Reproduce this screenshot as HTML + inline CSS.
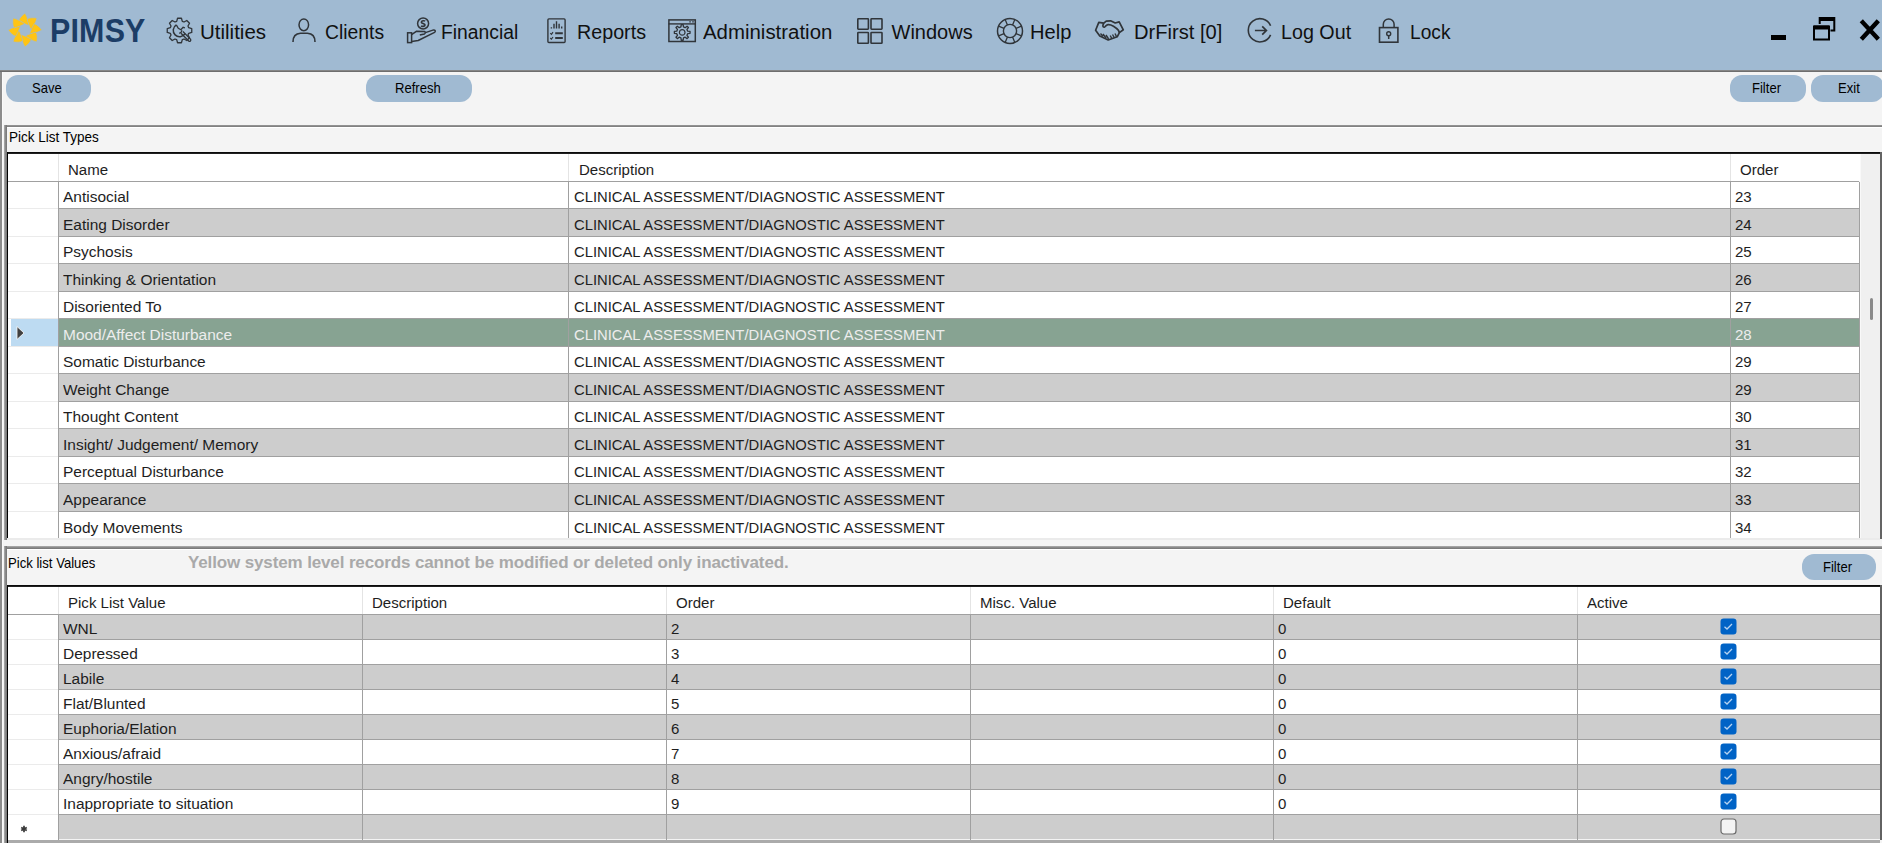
<!DOCTYPE html><html><head><meta charset="utf-8"><style>
*{margin:0;padding:0;box-sizing:border-box}
html,body{width:1882px;height:843px;overflow:hidden;background:#F4F4F4}
body{position:relative;font-family:"Liberation Sans",sans-serif}
.t{position:absolute;white-space:nowrap}
.r{position:absolute}
.btn{position:absolute;background:#A0BAD2;border-radius:12px}
</style></head><body><div class="r" style="left:0px;top:0px;width:1882px;height:70px;background:#A0BAD2;"></div>
<div class="r" style="left:0px;top:70px;width:1882px;height:1px;background:#858585;"></div>
<div class="r" style="left:0px;top:71px;width:1882px;height:1px;background:#6E6E6E;"></div>
<div class="r" style="left:0px;top:72px;width:2px;height:771px;background:#8C8C8C;"></div>
<div class="r" style="left:2px;top:72px;width:1px;height:771px;background:#FAFAFA;"></div>
<svg class="r" style="left:7px;top:12px" width="36" height="36" viewBox="-18 -18 36 36"><g fill="#FFC414" stroke="#A0BAD2" stroke-width="0.6" stroke-linejoin="round"><path d="M0.1,-16.8 C-2.6,-15 -5.6,-12 -6.3,-9.2 C-3.6,-7.6 0.6,-5.6 4.3,-4.4 C3.6,-8.6 2.2,-13 0.1,-16.8 Z" transform="rotate(0)" /><path d="M0.1,-16.8 C-2.6,-15 -5.6,-12 -6.3,-9.2 C-3.6,-7.6 0.6,-5.6 4.3,-4.4 C3.6,-8.6 2.2,-13 0.1,-16.8 Z" transform="rotate(45)" /><path d="M0.1,-16.8 C-2.6,-15 -5.6,-12 -6.3,-9.2 C-3.6,-7.6 0.6,-5.6 4.3,-4.4 C3.6,-8.6 2.2,-13 0.1,-16.8 Z" transform="rotate(90)" /><path d="M0.1,-16.8 C-2.6,-15 -5.6,-12 -6.3,-9.2 C-3.6,-7.6 0.6,-5.6 4.3,-4.4 C3.6,-8.6 2.2,-13 0.1,-16.8 Z" transform="rotate(135)" /><path d="M0.1,-16.8 C-2.6,-15 -5.6,-12 -6.3,-9.2 C-3.6,-7.6 0.6,-5.6 4.3,-4.4 C3.6,-8.6 2.2,-13 0.1,-16.8 Z" transform="rotate(180)" /><path d="M0.1,-16.8 C-2.6,-15 -5.6,-12 -6.3,-9.2 C-3.6,-7.6 0.6,-5.6 4.3,-4.4 C3.6,-8.6 2.2,-13 0.1,-16.8 Z" transform="rotate(225)" /><path d="M0.1,-16.8 C-2.6,-15 -5.6,-12 -6.3,-9.2 C-3.6,-7.6 0.6,-5.6 4.3,-4.4 C3.6,-8.6 2.2,-13 0.1,-16.8 Z" transform="rotate(270)" /><path d="M0.1,-16.8 C-2.6,-15 -5.6,-12 -6.3,-9.2 C-3.6,-7.6 0.6,-5.6 4.3,-4.4 C3.6,-8.6 2.2,-13 0.1,-16.8 Z" transform="rotate(315)" /></g></svg>
<div class="t" style="left:49.5px;top:11.22px;font-size:34px;line-height:37.984px;color:#1C3D66;font-weight:bold;transform:scaleX(0.895);transform-origin:0 0;letter-spacing:0.2px;">PIMSY</div>
<div class="t" style="left:200.46px;top:20.89px;font-size:20px;line-height:22.344px;color:#111;font-weight:normal;transform:scaleX(1.0242);transform-origin:0 0;">Utilities</div>
<div class="t" style="left:324.53px;top:20.89px;font-size:20px;line-height:22.344px;color:#111;font-weight:normal;transform:scaleX(0.9661);transform-origin:0 0;">Clients</div>
<div class="t" style="left:441.27px;top:20.89px;font-size:20px;line-height:22.344px;color:#111;font-weight:normal;transform:scaleX(0.9649);transform-origin:0 0;">Financial</div>
<div class="t" style="left:576.53px;top:20.89px;font-size:20px;line-height:22.344px;color:#111;font-weight:normal;transform:scaleX(0.9851);transform-origin:0 0;">Reports</div>
<div class="t" style="left:703.39px;top:20.89px;font-size:20px;line-height:22.344px;color:#111;font-weight:normal;transform:scaleX(1.0208);transform-origin:0 0;">Administration</div>
<div class="t" style="left:891.5px;top:20.89px;font-size:20px;line-height:22.344px;color:#111;font-weight:normal;transform:scaleX(1.0000);transform-origin:0 0;">Windows</div>
<div class="t" style="left:1030.29px;top:20.89px;font-size:20px;line-height:22.344px;color:#111;font-weight:normal;transform:scaleX(1.0053);transform-origin:0 0;">Help</div>
<div class="t" style="left:1134.49px;top:20.89px;font-size:20px;line-height:22.344px;color:#111;font-weight:normal;transform:scaleX(1.0060);transform-origin:0 0;">DrFirst [0]</div>
<div class="t" style="left:1281.33px;top:20.89px;font-size:20px;line-height:22.344px;color:#111;font-weight:normal;transform:scaleX(0.9855);transform-origin:0 0;">Log Out</div>
<div class="t" style="left:1409.88px;top:20.89px;font-size:20px;line-height:22.344px;color:#111;font-weight:normal;transform:scaleX(0.9575);transform-origin:0 0;">Lock</div>
<svg class="r" style="left:166px;top:17px;" width="28" height="28" viewBox="0 0 28 28" fill="none" stroke="#30353A" stroke-width="1.6"><g transform="translate(13.5,13.5)"><path d="M-2.81,-9.18 L-1.94,-12.25 L1.94,-12.25 L2.81,-9.18 L4.51,-8.48 L7.29,-10.03 L10.03,-7.29 L8.48,-4.51 L9.18,-2.81 L12.25,-1.94 L12.25,1.94 L9.18,2.81 L8.48,4.51 L10.03,7.29 L7.29,10.03 L4.51,8.48 L2.81,9.18 L1.94,12.25 L-1.94,12.25 L-2.81,9.18 L-4.51,8.48 L-7.29,10.03 L-10.03,7.29 L-8.48,4.51 L-9.18,2.81 L-12.25,1.94 L-12.25,-1.94 L-9.18,-2.81 L-8.48,-4.51 L-10.03,-7.29 L-7.29,-10.03 L-4.51,-8.48 Z" stroke-width="1.3" stroke-linejoin="round"/><path d="M-3.2,-5.6 A6.4,6.4 0 1 0 5.6,3.2" stroke-width="1.5"/><path d="M-3.2,-5.6 L-1.2,-2.2 L1.4,-0.8 L3.6,-3.2 L5.4,-2.6" stroke-width="1.3"/><path d="M1.5,2.8 L9.2,10.5 M3.4,1 L11,8.6 M9.2,10.5 C10.4,11.6 11.9,10.2 11,8.6" stroke-width="1.3"/><path d="M2.2,-0.4 A2.5,2.5 0 0 1 -0.4,2.6" stroke-width="1.2"/></g></svg>
<svg class="r" style="left:291px;top:17px;" width="27" height="27" viewBox="0 0 27 27" fill="none" stroke="#30353A" stroke-width="1.6"><ellipse cx="12.8" cy="7.8" rx="4.8" ry="5.9" stroke-width="1.5"/><path d="M2,25 C2,19.2 4.2,16.6 9.5,16.3 L16.5,16.3 C21.8,16.6 24,19.2 24,25" stroke-width="1.6"/></svg>
<svg class="r" style="left:402px;top:14px;" width="38" height="32" viewBox="0 0 38 32" fill="none" stroke="#30353A" stroke-width="1.6"><circle cx="21.1" cy="9.5" r="5.5" stroke-width="1.5"/><path d="M23.1,7.3 C22.4,6.5 19.4,6.4 19.4,8.2 C19.5,9.7 23,9.3 23,11 C22.9,12.7 19.9,12.6 19.1,11.8" stroke-width="1.7"/><rect x="5.6" y="18.8" width="4" height="9.8" stroke-width="1.5"/><path d="M9.6,20.6 L14.3,17.3 L22.6,17.5 C23.6,18 23.4,19.5 22.5,19.9 L17.8,21" stroke-width="1.5" stroke-linejoin="round"/><path d="M23.4,18.6 L31.6,15.9 C33.4,15.9 33.8,17.6 32.6,18.4 L16.2,26.5 L9.6,27.4" stroke-width="1.5" stroke-linejoin="round"/></svg>
<svg class="r" style="left:546px;top:17px;" width="22" height="28" viewBox="0 0 22 28" fill="none" stroke="#30353A" stroke-width="1.6"><rect x="1.9" y="1.9" width="17.2" height="23.6" rx="1" stroke-width="1.4"/><path d="M5.4,11.6 V10.2 M8,11.6 V6.8 M10.5,11.6 V4.3 M13.1,11.6 V6.8 M15.7,11.6 V9.4" stroke-width="1.4"/><path d="M4.3,16.2 L5.4,17.3 L7,15.2 M4.3,21 L5.4,22.1 L7,20" stroke-width="1.2"/><path d="M9.2,16.3 H16.8 M9.2,21.1 H16.8" stroke-width="2"/></svg>
<svg class="r" style="left:667px;top:18px;" width="31" height="26" viewBox="0 0 31 26" fill="none" stroke="#30353A" stroke-width="1.6"><rect x="1.9" y="1.9" width="26.4" height="21.6" stroke-width="1.5"/><path d="M1.5,5.9 H28.5" stroke-width="1.4"/><path d="M22.3,3.9 H23.8 M25.2,3.9 H26.8" stroke-width="1.1"/><g transform="translate(15.2,14.4)"><path d="M-1.26,-5.46 L-0.96,-7.84 L0.96,-7.84 L1.26,-5.46 L2.97,-4.75 L4.86,-6.23 L6.23,-4.86 L4.75,-2.97 L5.46,-1.26 L7.84,-0.96 L7.84,0.96 L5.46,1.26 L4.75,2.97 L6.23,4.86 L4.86,6.23 L2.97,4.75 L1.26,5.46 L0.96,7.84 L-0.96,7.84 L-1.26,5.46 L-2.97,4.75 L-4.86,6.23 L-6.23,4.86 L-4.75,2.97 L-5.46,1.26 L-7.84,0.96 L-7.84,-0.96 L-5.46,-1.26 L-4.75,-2.97 L-6.23,-4.86 L-4.86,-6.23 L-2.97,-4.75 Z" stroke-width="1.3" stroke-linejoin="round"/><circle r="2.8" stroke-width="1.2"/></g></svg>
<svg class="r" style="left:856px;top:17px;" width="29" height="28" viewBox="0 0 29 28" fill="none" stroke="#30353A" stroke-width="1.6"><rect x="1.8" y="1.8" width="10.6" height="10.4" rx="0.6"/><rect x="15" y="1.8" width="11" height="10.4" rx="0.6"/><rect x="1.8" y="15.5" width="10.6" height="10.8" rx="0.6"/><rect x="15" y="15.5" width="11" height="10.8" rx="0.6"/></svg>
<svg class="r" style="left:994.5px;top:15.5px;" width="30" height="30" viewBox="0 0 30 30" fill="none" stroke="#30353A" stroke-width="1.6"><circle cx="15" cy="15" r="12.5" stroke-width="1.5"/><circle cx="15" cy="15" r="6.6" stroke-width="1.4"/><path d="M12.46,9.02 L10.15,3.59 M17.54,9.02 L19.85,3.59 M20.98,12.46 L26.41,10.15 M20.98,17.54 L26.41,19.85 M17.54,20.98 L19.85,26.41 M12.46,20.98 L10.15,26.41 M9.02,17.54 L3.59,19.85 M9.02,12.46 L3.59,10.15" stroke-width="1.3"/></svg>
<svg class="r" style="left:1092px;top:16px;" width="36" height="28" viewBox="0 0 36 28" fill="none" stroke="#30353A" stroke-width="1.6"><path d="M3.6,14.2 L6.8,6.4 L11.8,7.2 L14.2,5.1 L18.6,4.8 L23.2,7 L27.2,5.9 L31.3,13.8 L27.4,16.6 L25.2,20.8 L16.2,24 L7.8,20 Z" stroke-width="1.7" stroke-linejoin="round"/><path d="M11.8,7.2 C10.5,9 10.5,11.5 12.4,11.2 C13.5,11 13.5,9 16,8.6 C19,8.3 24,11 26.6,14.6 L27.4,16.6" stroke-width="1.7"/><path d="M8.5,17.5 L11,20.5 M11,18 L14,22 M14,19 L16.6,23 M18.2,19.5 L20,22.8 M20.5,18.5 L22.5,22 M23,17.5 L24.6,20.8" stroke-width="1.4"/></svg>
<svg class="r" style="left:1246px;top:17px;" width="28" height="28" viewBox="0 0 28 28" fill="none" stroke="#30353A" stroke-width="1.6"><path d="M24.58,8.77 A11.6,11.6 0 1 0 24.58,17.83" stroke-width="1.6"/><path d="M8.9,13.5 H20 M16.2,9.3 L20.4,13.5 L16.2,17.7" stroke-width="1.7"/></svg>
<svg class="r" style="left:1377px;top:17px;" width="24" height="28" viewBox="0 0 24 28" fill="none" stroke="#30353A" stroke-width="1.6"><rect x="2.5" y="10.6" width="18.4" height="14.6" stroke-width="1.6"/><path d="M6.3,10.6 V7.3 A5.4,5.4 0 0 1 17.1,7.3 V10.6" stroke-width="1.5"/><circle cx="11.7" cy="16.8" r="2" stroke-width="1.4"/><path d="M11.7,18.8 V22" stroke-width="1.5"/></svg>
<div class="r" style="left:1771px;top:35px;width:15px;height:5px;background:#000;"></div>
<svg class="r" style="left:1812px;top:16px;" width="26" height="25" viewBox="0 0 26 25" fill="none" stroke="#30353A" stroke-width="1.6"><path d="M7.7,8 V2 H22.3 V14.5 H18.5" stroke="#000" stroke-width="2"/><path d="M7.7,3 H22.3" stroke="#000" stroke-width="4"/><rect x="2" y="10.5" width="15" height="13" stroke="#000" stroke-width="2"/><path d="M2,11.5 H17" stroke="#000" stroke-width="4"/></svg>
<svg class="r" style="left:1859px;top:18px;" width="23" height="24" viewBox="0 0 23 24" fill="none" stroke="#30353A" stroke-width="1.6"><path d="M3.8,4.4 L17.8,19.6 M17.8,4.4 L3.8,19.6" stroke="#000" stroke-width="4.4" stroke-linecap="square"/></svg>
<div class="btn" style="left:6px;top:75px;width:85px;height:27px;"></div><div class="t" style="left:32.1px;top:80.37px;font-size:15px;line-height:16.758px;color:#000;font-weight:normal;transform:scaleX(0.87);transform-origin:0 0;">Save</div>
<div class="btn" style="left:366px;top:75px;width:106px;height:27px;"></div><div class="t" style="left:394.6px;top:80.37px;font-size:15px;line-height:16.758px;color:#000;font-weight:normal;transform:scaleX(0.87);transform-origin:0 0;">Refresh</div>
<div class="btn" style="left:1730px;top:75px;width:76px;height:27px;"></div><div class="t" style="left:1752.0px;top:80.37px;font-size:15px;line-height:16.758px;color:#000;font-weight:normal;transform:scaleX(0.87);transform-origin:0 0;">Filter</div>
<div class="btn" style="left:1811px;top:75px;width:73px;height:27px;"></div><div class="t" style="left:1837.6px;top:80.37px;font-size:15px;line-height:16.758px;color:#000;font-weight:normal;transform:scaleX(0.87);transform-origin:0 0;">Exit</div>
<div class="r" style="left:5px;top:125px;width:1877px;height:2px;background:linear-gradient(#9A9A9A,#7A7A7A);"></div>
<div class="r" style="left:4px;top:125px;width:3px;height:415px;background:linear-gradient(90deg,#B0B0B0,#8A8A8A,#747474);"></div>
<div class="r" style="left:7px;top:127px;width:1875px;height:1px;background:#FFFFFF;"></div>
<div class="t" style="left:8.7px;top:129.42px;font-size:15px;line-height:16.758px;color:#000;font-weight:normal;transform:scaleX(0.9);transform-origin:0 0;">Pick List Types</div>
<div class="r" style="left:7px;top:152px;width:1873px;height:2px;background:linear-gradient(#000,#2A2A2A);"></div>
<div class="r" style="left:7px;top:152px;width:1px;height:386px;background:#000;"></div>
<div class="r" style="left:1880px;top:152px;width:2px;height:387px;background:#646464;"></div>
<div class="r" style="left:8px;top:154px;width:1852px;height:27px;background:#FFFFFF;"></div>
<div class="r" style="left:8px;top:181px;width:1851px;height:1px;background:#A0A0A0;"></div>
<div class="r" style="left:58px;top:154px;width:1px;height:27px;background:#E4E4E4;"></div>
<div class="r" style="left:568px;top:154px;width:1px;height:27px;background:#E4E4E4;"></div>
<div class="r" style="left:1730px;top:154px;width:1px;height:27px;background:#E4E4E4;"></div>
<div class="t" style="left:68px;top:160.97px;font-size:15.5px;line-height:17.316px;color:#1E1E1E;font-weight:normal;transform:scaleX(0.97);transform-origin:0 0;">Name</div>
<div class="t" style="left:578.5px;top:160.97px;font-size:15.5px;line-height:17.316px;color:#1E1E1E;font-weight:normal;transform:scaleX(0.97);transform-origin:0 0;">Description</div>
<div class="t" style="left:1740px;top:160.97px;font-size:15.5px;line-height:17.316px;color:#1E1E1E;font-weight:normal;transform:scaleX(0.97);transform-origin:0 0;">Order</div>
<div class="r" style="left:1860px;top:154px;width:20px;height:385px;background:#F0F0F0;"></div>
<div class="r" style="left:1860px;top:154px;width:1px;height:385px;background:#F9F9F9;"></div>
<div class="r" style="left:1870px;top:298px;width:3px;height:22px;background:#8A8A8A;border-radius:1.5px;"></div>
<div class="r" style="left:8px;top:182px;width:50px;height:27px;background:#FFFFFF;"></div>
<div class="r" style="left:8px;top:208px;width:50px;height:1px;background:#EBEBEB;"></div>
<div class="r" style="left:59px;top:182px;width:1800px;height:26px;background:#FFFFFF;"></div>
<div class="r" style="left:59px;top:208px;width:1800px;height:1px;background:#A0A0A0;"></div>
<div class="r" style="left:58px;top:182px;width:1px;height:27px;background:#A0A0A0;"></div>
<div class="r" style="left:568px;top:182px;width:1px;height:27px;background:#A0A0A0;"></div>
<div class="r" style="left:1730px;top:182px;width:1px;height:27px;background:#A0A0A0;"></div>
<div class="r" style="left:1859px;top:182px;width:1px;height:27px;background:#A0A0A0;"></div>
<div class="t" style="left:63px;top:188.47px;font-size:15.5px;line-height:17.316px;color:#1E1E1E;font-weight:normal;transform:scaleX(0.998);transform-origin:0 0;">Antisocial</div>
<div class="t" style="left:573.5px;top:188.47px;font-size:15.5px;line-height:17.316px;color:#1E1E1E;font-weight:normal;transform:scaleX(0.954);transform-origin:0 0;">CLINICAL ASSESSMENT/DIAGNOSTIC ASSESSMENT</div>
<div class="t" style="left:1735px;top:188.47px;font-size:15.5px;line-height:17.316px;color:#1E1E1E;font-weight:normal;transform:scaleX(0.97);transform-origin:0 0;">23</div>
<div class="r" style="left:8px;top:209px;width:50px;height:28px;background:#FFFFFF;"></div>
<div class="r" style="left:8px;top:236px;width:50px;height:1px;background:#EBEBEB;"></div>
<div class="r" style="left:59px;top:209px;width:1800px;height:27px;background:#CDCDCD;"></div>
<div class="r" style="left:59px;top:236px;width:1800px;height:1px;background:#A0A0A0;"></div>
<div class="r" style="left:58px;top:209px;width:1px;height:28px;background:#A0A0A0;"></div>
<div class="r" style="left:568px;top:209px;width:1px;height:28px;background:#A0A0A0;"></div>
<div class="r" style="left:1730px;top:209px;width:1px;height:28px;background:#A0A0A0;"></div>
<div class="r" style="left:1859px;top:209px;width:1px;height:28px;background:#A0A0A0;"></div>
<div class="t" style="left:63px;top:216.47px;font-size:15.5px;line-height:17.316px;color:#1E1E1E;font-weight:normal;transform:scaleX(0.998);transform-origin:0 0;">Eating Disorder</div>
<div class="t" style="left:573.5px;top:216.47px;font-size:15.5px;line-height:17.316px;color:#1E1E1E;font-weight:normal;transform:scaleX(0.954);transform-origin:0 0;">CLINICAL ASSESSMENT/DIAGNOSTIC ASSESSMENT</div>
<div class="t" style="left:1735px;top:216.47px;font-size:15.5px;line-height:17.316px;color:#1E1E1E;font-weight:normal;transform:scaleX(0.97);transform-origin:0 0;">24</div>
<div class="r" style="left:8px;top:237px;width:50px;height:27px;background:#FFFFFF;"></div>
<div class="r" style="left:8px;top:263px;width:50px;height:1px;background:#EBEBEB;"></div>
<div class="r" style="left:59px;top:237px;width:1800px;height:26px;background:#FFFFFF;"></div>
<div class="r" style="left:59px;top:263px;width:1800px;height:1px;background:#A0A0A0;"></div>
<div class="r" style="left:58px;top:237px;width:1px;height:27px;background:#A0A0A0;"></div>
<div class="r" style="left:568px;top:237px;width:1px;height:27px;background:#A0A0A0;"></div>
<div class="r" style="left:1730px;top:237px;width:1px;height:27px;background:#A0A0A0;"></div>
<div class="r" style="left:1859px;top:237px;width:1px;height:27px;background:#A0A0A0;"></div>
<div class="t" style="left:63px;top:243.47px;font-size:15.5px;line-height:17.316px;color:#1E1E1E;font-weight:normal;transform:scaleX(0.998);transform-origin:0 0;">Psychosis</div>
<div class="t" style="left:573.5px;top:243.47px;font-size:15.5px;line-height:17.316px;color:#1E1E1E;font-weight:normal;transform:scaleX(0.954);transform-origin:0 0;">CLINICAL ASSESSMENT/DIAGNOSTIC ASSESSMENT</div>
<div class="t" style="left:1735px;top:243.47px;font-size:15.5px;line-height:17.316px;color:#1E1E1E;font-weight:normal;transform:scaleX(0.97);transform-origin:0 0;">25</div>
<div class="r" style="left:8px;top:264px;width:50px;height:28px;background:#FFFFFF;"></div>
<div class="r" style="left:8px;top:291px;width:50px;height:1px;background:#EBEBEB;"></div>
<div class="r" style="left:59px;top:264px;width:1800px;height:27px;background:#CDCDCD;"></div>
<div class="r" style="left:59px;top:291px;width:1800px;height:1px;background:#A0A0A0;"></div>
<div class="r" style="left:58px;top:264px;width:1px;height:28px;background:#A0A0A0;"></div>
<div class="r" style="left:568px;top:264px;width:1px;height:28px;background:#A0A0A0;"></div>
<div class="r" style="left:1730px;top:264px;width:1px;height:28px;background:#A0A0A0;"></div>
<div class="r" style="left:1859px;top:264px;width:1px;height:28px;background:#A0A0A0;"></div>
<div class="t" style="left:63px;top:271.47px;font-size:15.5px;line-height:17.316px;color:#1E1E1E;font-weight:normal;transform:scaleX(0.998);transform-origin:0 0;">Thinking &amp; Orientation</div>
<div class="t" style="left:573.5px;top:271.47px;font-size:15.5px;line-height:17.316px;color:#1E1E1E;font-weight:normal;transform:scaleX(0.954);transform-origin:0 0;">CLINICAL ASSESSMENT/DIAGNOSTIC ASSESSMENT</div>
<div class="t" style="left:1735px;top:271.47px;font-size:15.5px;line-height:17.316px;color:#1E1E1E;font-weight:normal;transform:scaleX(0.97);transform-origin:0 0;">26</div>
<div class="r" style="left:8px;top:292px;width:50px;height:27px;background:#FFFFFF;"></div>
<div class="r" style="left:8px;top:318px;width:50px;height:1px;background:#EBEBEB;"></div>
<div class="r" style="left:59px;top:292px;width:1800px;height:26px;background:#FFFFFF;"></div>
<div class="r" style="left:59px;top:318px;width:1800px;height:1px;background:#A0A0A0;"></div>
<div class="r" style="left:58px;top:292px;width:1px;height:27px;background:#A0A0A0;"></div>
<div class="r" style="left:568px;top:292px;width:1px;height:27px;background:#A0A0A0;"></div>
<div class="r" style="left:1730px;top:292px;width:1px;height:27px;background:#A0A0A0;"></div>
<div class="r" style="left:1859px;top:292px;width:1px;height:27px;background:#A0A0A0;"></div>
<div class="t" style="left:63px;top:298.47px;font-size:15.5px;line-height:17.316px;color:#1E1E1E;font-weight:normal;transform:scaleX(0.998);transform-origin:0 0;">Disoriented To</div>
<div class="t" style="left:573.5px;top:298.47px;font-size:15.5px;line-height:17.316px;color:#1E1E1E;font-weight:normal;transform:scaleX(0.954);transform-origin:0 0;">CLINICAL ASSESSMENT/DIAGNOSTIC ASSESSMENT</div>
<div class="t" style="left:1735px;top:298.47px;font-size:15.5px;line-height:17.316px;color:#1E1E1E;font-weight:normal;transform:scaleX(0.97);transform-origin:0 0;">27</div>
<div class="r" style="left:8px;top:319px;width:50px;height:28px;background:#FFFFFF;"></div>
<div class="r" style="left:11px;top:319px;width:47px;height:27px;background:#BDDBF2;"></div>
<div class="r" style="left:8px;top:346px;width:50px;height:1px;background:#EBEBEB;"></div>
<div class="r" style="left:59px;top:319px;width:1800px;height:27px;background:#87A392;"></div>
<div class="r" style="left:59px;top:346px;width:1800px;height:1px;background:#A0A0A0;"></div>
<div class="r" style="left:58px;top:319px;width:1px;height:28px;background:#A0A0A0;"></div>
<div class="r" style="left:568px;top:319px;width:1px;height:28px;background:#A0A0A0;"></div>
<div class="r" style="left:1730px;top:319px;width:1px;height:28px;background:#A0A0A0;"></div>
<div class="r" style="left:1859px;top:319px;width:1px;height:28px;background:#A0A0A0;"></div>
<div class="t" style="left:63px;top:326.47px;font-size:15.5px;line-height:17.316px;color:#EDEDED;font-weight:normal;transform:scaleX(0.998);transform-origin:0 0;">Mood/Affect Disturbance</div>
<div class="t" style="left:573.5px;top:326.47px;font-size:15.5px;line-height:17.316px;color:#EDEDED;font-weight:normal;transform:scaleX(0.954);transform-origin:0 0;">CLINICAL ASSESSMENT/DIAGNOSTIC ASSESSMENT</div>
<div class="t" style="left:1735px;top:326.47px;font-size:15.5px;line-height:17.316px;color:#EDEDED;font-weight:normal;transform:scaleX(0.97);transform-origin:0 0;">28</div>
<svg class="r" style="left:15px;top:325px" width="12" height="16" viewBox="0 0 12 16"><path d="M2,1.5 L9,8 L2,14.5 Z" fill="#404040" stroke="#fff" stroke-width="0.8"/></svg>
<div class="r" style="left:8px;top:347px;width:50px;height:27px;background:#FFFFFF;"></div>
<div class="r" style="left:8px;top:373px;width:50px;height:1px;background:#EBEBEB;"></div>
<div class="r" style="left:59px;top:347px;width:1800px;height:26px;background:#FFFFFF;"></div>
<div class="r" style="left:59px;top:373px;width:1800px;height:1px;background:#A0A0A0;"></div>
<div class="r" style="left:58px;top:347px;width:1px;height:27px;background:#A0A0A0;"></div>
<div class="r" style="left:568px;top:347px;width:1px;height:27px;background:#A0A0A0;"></div>
<div class="r" style="left:1730px;top:347px;width:1px;height:27px;background:#A0A0A0;"></div>
<div class="r" style="left:1859px;top:347px;width:1px;height:27px;background:#A0A0A0;"></div>
<div class="t" style="left:63px;top:353.47px;font-size:15.5px;line-height:17.316px;color:#1E1E1E;font-weight:normal;transform:scaleX(0.998);transform-origin:0 0;">Somatic Disturbance</div>
<div class="t" style="left:573.5px;top:353.47px;font-size:15.5px;line-height:17.316px;color:#1E1E1E;font-weight:normal;transform:scaleX(0.954);transform-origin:0 0;">CLINICAL ASSESSMENT/DIAGNOSTIC ASSESSMENT</div>
<div class="t" style="left:1735px;top:353.47px;font-size:15.5px;line-height:17.316px;color:#1E1E1E;font-weight:normal;transform:scaleX(0.97);transform-origin:0 0;">29</div>
<div class="r" style="left:8px;top:374px;width:50px;height:28px;background:#FFFFFF;"></div>
<div class="r" style="left:8px;top:401px;width:50px;height:1px;background:#EBEBEB;"></div>
<div class="r" style="left:59px;top:374px;width:1800px;height:27px;background:#CDCDCD;"></div>
<div class="r" style="left:59px;top:401px;width:1800px;height:1px;background:#A0A0A0;"></div>
<div class="r" style="left:58px;top:374px;width:1px;height:28px;background:#A0A0A0;"></div>
<div class="r" style="left:568px;top:374px;width:1px;height:28px;background:#A0A0A0;"></div>
<div class="r" style="left:1730px;top:374px;width:1px;height:28px;background:#A0A0A0;"></div>
<div class="r" style="left:1859px;top:374px;width:1px;height:28px;background:#A0A0A0;"></div>
<div class="t" style="left:63px;top:381.47px;font-size:15.5px;line-height:17.316px;color:#1E1E1E;font-weight:normal;transform:scaleX(0.998);transform-origin:0 0;">Weight Change</div>
<div class="t" style="left:573.5px;top:381.47px;font-size:15.5px;line-height:17.316px;color:#1E1E1E;font-weight:normal;transform:scaleX(0.954);transform-origin:0 0;">CLINICAL ASSESSMENT/DIAGNOSTIC ASSESSMENT</div>
<div class="t" style="left:1735px;top:381.47px;font-size:15.5px;line-height:17.316px;color:#1E1E1E;font-weight:normal;transform:scaleX(0.97);transform-origin:0 0;">29</div>
<div class="r" style="left:8px;top:402px;width:50px;height:27px;background:#FFFFFF;"></div>
<div class="r" style="left:8px;top:428px;width:50px;height:1px;background:#EBEBEB;"></div>
<div class="r" style="left:59px;top:402px;width:1800px;height:26px;background:#FFFFFF;"></div>
<div class="r" style="left:59px;top:428px;width:1800px;height:1px;background:#A0A0A0;"></div>
<div class="r" style="left:58px;top:402px;width:1px;height:27px;background:#A0A0A0;"></div>
<div class="r" style="left:568px;top:402px;width:1px;height:27px;background:#A0A0A0;"></div>
<div class="r" style="left:1730px;top:402px;width:1px;height:27px;background:#A0A0A0;"></div>
<div class="r" style="left:1859px;top:402px;width:1px;height:27px;background:#A0A0A0;"></div>
<div class="t" style="left:63px;top:408.47px;font-size:15.5px;line-height:17.316px;color:#1E1E1E;font-weight:normal;transform:scaleX(0.998);transform-origin:0 0;">Thought Content</div>
<div class="t" style="left:573.5px;top:408.47px;font-size:15.5px;line-height:17.316px;color:#1E1E1E;font-weight:normal;transform:scaleX(0.954);transform-origin:0 0;">CLINICAL ASSESSMENT/DIAGNOSTIC ASSESSMENT</div>
<div class="t" style="left:1735px;top:408.47px;font-size:15.5px;line-height:17.316px;color:#1E1E1E;font-weight:normal;transform:scaleX(0.97);transform-origin:0 0;">30</div>
<div class="r" style="left:8px;top:429px;width:50px;height:28px;background:#FFFFFF;"></div>
<div class="r" style="left:8px;top:456px;width:50px;height:1px;background:#EBEBEB;"></div>
<div class="r" style="left:59px;top:429px;width:1800px;height:27px;background:#CDCDCD;"></div>
<div class="r" style="left:59px;top:456px;width:1800px;height:1px;background:#A0A0A0;"></div>
<div class="r" style="left:58px;top:429px;width:1px;height:28px;background:#A0A0A0;"></div>
<div class="r" style="left:568px;top:429px;width:1px;height:28px;background:#A0A0A0;"></div>
<div class="r" style="left:1730px;top:429px;width:1px;height:28px;background:#A0A0A0;"></div>
<div class="r" style="left:1859px;top:429px;width:1px;height:28px;background:#A0A0A0;"></div>
<div class="t" style="left:63px;top:436.47px;font-size:15.5px;line-height:17.316px;color:#1E1E1E;font-weight:normal;transform:scaleX(0.998);transform-origin:0 0;">Insight/ Judgement/ Memory</div>
<div class="t" style="left:573.5px;top:436.47px;font-size:15.5px;line-height:17.316px;color:#1E1E1E;font-weight:normal;transform:scaleX(0.954);transform-origin:0 0;">CLINICAL ASSESSMENT/DIAGNOSTIC ASSESSMENT</div>
<div class="t" style="left:1735px;top:436.47px;font-size:15.5px;line-height:17.316px;color:#1E1E1E;font-weight:normal;transform:scaleX(0.97);transform-origin:0 0;">31</div>
<div class="r" style="left:8px;top:457px;width:50px;height:27px;background:#FFFFFF;"></div>
<div class="r" style="left:8px;top:483px;width:50px;height:1px;background:#EBEBEB;"></div>
<div class="r" style="left:59px;top:457px;width:1800px;height:26px;background:#FFFFFF;"></div>
<div class="r" style="left:59px;top:483px;width:1800px;height:1px;background:#A0A0A0;"></div>
<div class="r" style="left:58px;top:457px;width:1px;height:27px;background:#A0A0A0;"></div>
<div class="r" style="left:568px;top:457px;width:1px;height:27px;background:#A0A0A0;"></div>
<div class="r" style="left:1730px;top:457px;width:1px;height:27px;background:#A0A0A0;"></div>
<div class="r" style="left:1859px;top:457px;width:1px;height:27px;background:#A0A0A0;"></div>
<div class="t" style="left:63px;top:463.47px;font-size:15.5px;line-height:17.316px;color:#1E1E1E;font-weight:normal;transform:scaleX(0.998);transform-origin:0 0;">Perceptual Disturbance</div>
<div class="t" style="left:573.5px;top:463.47px;font-size:15.5px;line-height:17.316px;color:#1E1E1E;font-weight:normal;transform:scaleX(0.954);transform-origin:0 0;">CLINICAL ASSESSMENT/DIAGNOSTIC ASSESSMENT</div>
<div class="t" style="left:1735px;top:463.47px;font-size:15.5px;line-height:17.316px;color:#1E1E1E;font-weight:normal;transform:scaleX(0.97);transform-origin:0 0;">32</div>
<div class="r" style="left:8px;top:484px;width:50px;height:28px;background:#FFFFFF;"></div>
<div class="r" style="left:8px;top:511px;width:50px;height:1px;background:#EBEBEB;"></div>
<div class="r" style="left:59px;top:484px;width:1800px;height:27px;background:#CDCDCD;"></div>
<div class="r" style="left:59px;top:511px;width:1800px;height:1px;background:#A0A0A0;"></div>
<div class="r" style="left:58px;top:484px;width:1px;height:28px;background:#A0A0A0;"></div>
<div class="r" style="left:568px;top:484px;width:1px;height:28px;background:#A0A0A0;"></div>
<div class="r" style="left:1730px;top:484px;width:1px;height:28px;background:#A0A0A0;"></div>
<div class="r" style="left:1859px;top:484px;width:1px;height:28px;background:#A0A0A0;"></div>
<div class="t" style="left:63px;top:491.47px;font-size:15.5px;line-height:17.316px;color:#1E1E1E;font-weight:normal;transform:scaleX(0.998);transform-origin:0 0;">Appearance</div>
<div class="t" style="left:573.5px;top:491.47px;font-size:15.5px;line-height:17.316px;color:#1E1E1E;font-weight:normal;transform:scaleX(0.954);transform-origin:0 0;">CLINICAL ASSESSMENT/DIAGNOSTIC ASSESSMENT</div>
<div class="t" style="left:1735px;top:491.47px;font-size:15.5px;line-height:17.316px;color:#1E1E1E;font-weight:normal;transform:scaleX(0.97);transform-origin:0 0;">33</div>
<div class="r" style="left:8px;top:512px;width:50px;height:28px;background:#FFFFFF;"></div>
<div class="r" style="left:59px;top:512px;width:1800px;height:27px;background:#FFFFFF;"></div>
<div class="r" style="left:58px;top:512px;width:1px;height:28px;background:#A0A0A0;"></div>
<div class="r" style="left:568px;top:512px;width:1px;height:28px;background:#A0A0A0;"></div>
<div class="r" style="left:1730px;top:512px;width:1px;height:28px;background:#A0A0A0;"></div>
<div class="r" style="left:1859px;top:512px;width:1px;height:28px;background:#A0A0A0;"></div>
<div class="t" style="left:63px;top:519.47px;font-size:15.5px;line-height:17.316px;color:#1E1E1E;font-weight:normal;transform:scaleX(0.998);transform-origin:0 0;">Body Movements</div>
<div class="t" style="left:573.5px;top:519.47px;font-size:15.5px;line-height:17.316px;color:#1E1E1E;font-weight:normal;transform:scaleX(0.954);transform-origin:0 0;">CLINICAL ASSESSMENT/DIAGNOSTIC ASSESSMENT</div>
<div class="t" style="left:1735px;top:519.47px;font-size:15.5px;line-height:17.316px;color:#1E1E1E;font-weight:normal;transform:scaleX(0.97);transform-origin:0 0;">34</div>
<div class="r" style="left:8px;top:539px;width:1872px;height:7px;background:#F4F4F4;"></div>
<div class="r" style="left:7px;top:538px;width:1873px;height:2px;background:#EBEBEB;"></div>
<div class="r" style="left:4px;top:546px;width:1878px;height:3px;background:linear-gradient(#B0B0B0,#8A8A8A,#747474);"></div>
<div class="r" style="left:4px;top:546px;width:3px;height:297px;background:linear-gradient(90deg,#B0B0B0,#8A8A8A,#747474);"></div>
<div class="r" style="left:7px;top:549px;width:1875px;height:1px;background:#FFFFFF;"></div>
<div class="r" style="left:7px;top:550px;width:1875px;height:35px;background:#F4F4F4;"></div>
<div class="t" style="left:7.6px;top:555.02px;font-size:15px;line-height:16.758px;color:#000;font-weight:normal;transform:scaleX(0.875);transform-origin:0 0;">Pick list Values</div>
<div class="t" style="left:188px;top:553.11px;font-size:17px;line-height:18.992px;color:#A9A9A9;font-weight:bold;letter-spacing:-0.13px;">Yellow system level records cannot be modified or deleted only inactivated.</div>
<div class="btn" style="left:1802px;top:554px;width:74px;height:26px;"></div><div class="t" style="left:1823.0px;top:558.87px;font-size:15px;line-height:16.758px;color:#000;font-weight:normal;transform:scaleX(0.87);transform-origin:0 0;">Filter</div>
<div class="r" style="left:7px;top:585px;width:1873px;height:2px;background:linear-gradient(#000,#2A2A2A);"></div>
<div class="r" style="left:7px;top:585px;width:1px;height:258px;background:#000;"></div>
<div class="r" style="left:1880px;top:585px;width:2px;height:255px;background:#626262;"></div>
<div class="r" style="left:8px;top:587px;width:1872px;height:27px;background:#FFFFFF;"></div>
<div class="r" style="left:8px;top:614px;width:1872px;height:1px;background:#A0A0A0;"></div>
<div class="r" style="left:58px;top:587px;width:1px;height:27px;background:#E4E4E4;"></div>
<div class="t" style="left:68px;top:593.97px;font-size:15.5px;line-height:17.316px;color:#1E1E1E;font-weight:normal;transform:scaleX(0.97);transform-origin:0 0;">Pick List Value</div>
<div class="r" style="left:362px;top:587px;width:1px;height:27px;background:#E4E4E4;"></div>
<div class="t" style="left:372px;top:593.97px;font-size:15.5px;line-height:17.316px;color:#1E1E1E;font-weight:normal;transform:scaleX(0.97);transform-origin:0 0;">Description</div>
<div class="r" style="left:666px;top:587px;width:1px;height:27px;background:#E4E4E4;"></div>
<div class="t" style="left:676px;top:593.97px;font-size:15.5px;line-height:17.316px;color:#1E1E1E;font-weight:normal;transform:scaleX(0.97);transform-origin:0 0;">Order</div>
<div class="r" style="left:970px;top:587px;width:1px;height:27px;background:#E4E4E4;"></div>
<div class="t" style="left:980px;top:593.97px;font-size:15.5px;line-height:17.316px;color:#1E1E1E;font-weight:normal;transform:scaleX(0.97);transform-origin:0 0;">Misc. Value</div>
<div class="r" style="left:1273px;top:587px;width:1px;height:27px;background:#E4E4E4;"></div>
<div class="t" style="left:1283px;top:593.97px;font-size:15.5px;line-height:17.316px;color:#1E1E1E;font-weight:normal;transform:scaleX(0.97);transform-origin:0 0;">Default</div>
<div class="r" style="left:1577px;top:587px;width:1px;height:27px;background:#E4E4E4;"></div>
<div class="t" style="left:1587px;top:593.97px;font-size:15.5px;line-height:17.316px;color:#1E1E1E;font-weight:normal;transform:scaleX(0.97);transform-origin:0 0;">Active</div>
<div class="r" style="left:8px;top:615px;width:50px;height:25px;background:#FFFFFF;"></div>
<div class="r" style="left:8px;top:639px;width:50px;height:1px;background:#EBEBEB;"></div>
<div class="r" style="left:59px;top:615px;width:1821px;height:24px;background:#CDCDCD;"></div>
<div class="r" style="left:59px;top:639px;width:1821px;height:1px;background:#A0A0A0;"></div>
<div class="r" style="left:58px;top:615px;width:1px;height:25px;background:#A0A0A0;"></div>
<div class="r" style="left:362px;top:615px;width:1px;height:25px;background:#A0A0A0;"></div>
<div class="r" style="left:666px;top:615px;width:1px;height:25px;background:#A0A0A0;"></div>
<div class="r" style="left:970px;top:615px;width:1px;height:25px;background:#A0A0A0;"></div>
<div class="r" style="left:1273px;top:615px;width:1px;height:25px;background:#A0A0A0;"></div>
<div class="r" style="left:1577px;top:615px;width:1px;height:25px;background:#A0A0A0;"></div>
<div class="t" style="left:63px;top:620.47px;font-size:15.5px;line-height:17.316px;color:#1E1E1E;font-weight:normal;transform:scaleX(0.998);transform-origin:0 0;">WNL</div>
<div class="t" style="left:671px;top:620.47px;font-size:15.5px;line-height:17.316px;color:#1E1E1E;font-weight:normal;transform:scaleX(0.97);transform-origin:0 0;">2</div>
<div class="t" style="left:1278px;top:620.47px;font-size:15.5px;line-height:17.316px;color:#1E1E1E;font-weight:normal;transform:scaleX(0.97);transform-origin:0 0;">0</div>
<svg class="r" style="left:1720px;top:618px" width="17" height="17" viewBox="0 0 17 17"><rect x="0.5" y="0.5" width="16" height="16" rx="3.2" fill="#0063C6"/><path d="M4.5,8.8 L7,11 L12,6" stroke="#B5D3F2" stroke-width="1.3" fill="none"/></svg>
<div class="r" style="left:8px;top:640px;width:50px;height:25px;background:#FFFFFF;"></div>
<div class="r" style="left:8px;top:664px;width:50px;height:1px;background:#EBEBEB;"></div>
<div class="r" style="left:59px;top:640px;width:1821px;height:24px;background:#FFFFFF;"></div>
<div class="r" style="left:59px;top:664px;width:1821px;height:1px;background:#A0A0A0;"></div>
<div class="r" style="left:58px;top:640px;width:1px;height:25px;background:#A0A0A0;"></div>
<div class="r" style="left:362px;top:640px;width:1px;height:25px;background:#A0A0A0;"></div>
<div class="r" style="left:666px;top:640px;width:1px;height:25px;background:#A0A0A0;"></div>
<div class="r" style="left:970px;top:640px;width:1px;height:25px;background:#A0A0A0;"></div>
<div class="r" style="left:1273px;top:640px;width:1px;height:25px;background:#A0A0A0;"></div>
<div class="r" style="left:1577px;top:640px;width:1px;height:25px;background:#A0A0A0;"></div>
<div class="t" style="left:63px;top:645.47px;font-size:15.5px;line-height:17.316px;color:#1E1E1E;font-weight:normal;transform:scaleX(0.998);transform-origin:0 0;">Depressed</div>
<div class="t" style="left:671px;top:645.47px;font-size:15.5px;line-height:17.316px;color:#1E1E1E;font-weight:normal;transform:scaleX(0.97);transform-origin:0 0;">3</div>
<div class="t" style="left:1278px;top:645.47px;font-size:15.5px;line-height:17.316px;color:#1E1E1E;font-weight:normal;transform:scaleX(0.97);transform-origin:0 0;">0</div>
<svg class="r" style="left:1720px;top:643px" width="17" height="17" viewBox="0 0 17 17"><rect x="0.5" y="0.5" width="16" height="16" rx="3.2" fill="#0063C6"/><path d="M4.5,8.8 L7,11 L12,6" stroke="#B5D3F2" stroke-width="1.3" fill="none"/></svg>
<div class="r" style="left:8px;top:665px;width:50px;height:25px;background:#FFFFFF;"></div>
<div class="r" style="left:8px;top:689px;width:50px;height:1px;background:#EBEBEB;"></div>
<div class="r" style="left:59px;top:665px;width:1821px;height:24px;background:#CDCDCD;"></div>
<div class="r" style="left:59px;top:689px;width:1821px;height:1px;background:#A0A0A0;"></div>
<div class="r" style="left:58px;top:665px;width:1px;height:25px;background:#A0A0A0;"></div>
<div class="r" style="left:362px;top:665px;width:1px;height:25px;background:#A0A0A0;"></div>
<div class="r" style="left:666px;top:665px;width:1px;height:25px;background:#A0A0A0;"></div>
<div class="r" style="left:970px;top:665px;width:1px;height:25px;background:#A0A0A0;"></div>
<div class="r" style="left:1273px;top:665px;width:1px;height:25px;background:#A0A0A0;"></div>
<div class="r" style="left:1577px;top:665px;width:1px;height:25px;background:#A0A0A0;"></div>
<div class="t" style="left:63px;top:670.47px;font-size:15.5px;line-height:17.316px;color:#1E1E1E;font-weight:normal;transform:scaleX(0.998);transform-origin:0 0;">Labile</div>
<div class="t" style="left:671px;top:670.47px;font-size:15.5px;line-height:17.316px;color:#1E1E1E;font-weight:normal;transform:scaleX(0.97);transform-origin:0 0;">4</div>
<div class="t" style="left:1278px;top:670.47px;font-size:15.5px;line-height:17.316px;color:#1E1E1E;font-weight:normal;transform:scaleX(0.97);transform-origin:0 0;">0</div>
<svg class="r" style="left:1720px;top:668px" width="17" height="17" viewBox="0 0 17 17"><rect x="0.5" y="0.5" width="16" height="16" rx="3.2" fill="#0063C6"/><path d="M4.5,8.8 L7,11 L12,6" stroke="#B5D3F2" stroke-width="1.3" fill="none"/></svg>
<div class="r" style="left:8px;top:690px;width:50px;height:25px;background:#FFFFFF;"></div>
<div class="r" style="left:8px;top:714px;width:50px;height:1px;background:#EBEBEB;"></div>
<div class="r" style="left:59px;top:690px;width:1821px;height:24px;background:#FFFFFF;"></div>
<div class="r" style="left:59px;top:714px;width:1821px;height:1px;background:#A0A0A0;"></div>
<div class="r" style="left:58px;top:690px;width:1px;height:25px;background:#A0A0A0;"></div>
<div class="r" style="left:362px;top:690px;width:1px;height:25px;background:#A0A0A0;"></div>
<div class="r" style="left:666px;top:690px;width:1px;height:25px;background:#A0A0A0;"></div>
<div class="r" style="left:970px;top:690px;width:1px;height:25px;background:#A0A0A0;"></div>
<div class="r" style="left:1273px;top:690px;width:1px;height:25px;background:#A0A0A0;"></div>
<div class="r" style="left:1577px;top:690px;width:1px;height:25px;background:#A0A0A0;"></div>
<div class="t" style="left:63px;top:695.47px;font-size:15.5px;line-height:17.316px;color:#1E1E1E;font-weight:normal;transform:scaleX(0.998);transform-origin:0 0;">Flat/Blunted</div>
<div class="t" style="left:671px;top:695.47px;font-size:15.5px;line-height:17.316px;color:#1E1E1E;font-weight:normal;transform:scaleX(0.97);transform-origin:0 0;">5</div>
<div class="t" style="left:1278px;top:695.47px;font-size:15.5px;line-height:17.316px;color:#1E1E1E;font-weight:normal;transform:scaleX(0.97);transform-origin:0 0;">0</div>
<svg class="r" style="left:1720px;top:693px" width="17" height="17" viewBox="0 0 17 17"><rect x="0.5" y="0.5" width="16" height="16" rx="3.2" fill="#0063C6"/><path d="M4.5,8.8 L7,11 L12,6" stroke="#B5D3F2" stroke-width="1.3" fill="none"/></svg>
<div class="r" style="left:8px;top:715px;width:50px;height:25px;background:#FFFFFF;"></div>
<div class="r" style="left:8px;top:739px;width:50px;height:1px;background:#EBEBEB;"></div>
<div class="r" style="left:59px;top:715px;width:1821px;height:24px;background:#CDCDCD;"></div>
<div class="r" style="left:59px;top:739px;width:1821px;height:1px;background:#A0A0A0;"></div>
<div class="r" style="left:58px;top:715px;width:1px;height:25px;background:#A0A0A0;"></div>
<div class="r" style="left:362px;top:715px;width:1px;height:25px;background:#A0A0A0;"></div>
<div class="r" style="left:666px;top:715px;width:1px;height:25px;background:#A0A0A0;"></div>
<div class="r" style="left:970px;top:715px;width:1px;height:25px;background:#A0A0A0;"></div>
<div class="r" style="left:1273px;top:715px;width:1px;height:25px;background:#A0A0A0;"></div>
<div class="r" style="left:1577px;top:715px;width:1px;height:25px;background:#A0A0A0;"></div>
<div class="t" style="left:63px;top:720.47px;font-size:15.5px;line-height:17.316px;color:#1E1E1E;font-weight:normal;transform:scaleX(0.998);transform-origin:0 0;">Euphoria/Elation</div>
<div class="t" style="left:671px;top:720.47px;font-size:15.5px;line-height:17.316px;color:#1E1E1E;font-weight:normal;transform:scaleX(0.97);transform-origin:0 0;">6</div>
<div class="t" style="left:1278px;top:720.47px;font-size:15.5px;line-height:17.316px;color:#1E1E1E;font-weight:normal;transform:scaleX(0.97);transform-origin:0 0;">0</div>
<svg class="r" style="left:1720px;top:718px" width="17" height="17" viewBox="0 0 17 17"><rect x="0.5" y="0.5" width="16" height="16" rx="3.2" fill="#0063C6"/><path d="M4.5,8.8 L7,11 L12,6" stroke="#B5D3F2" stroke-width="1.3" fill="none"/></svg>
<div class="r" style="left:8px;top:740px;width:50px;height:25px;background:#FFFFFF;"></div>
<div class="r" style="left:8px;top:764px;width:50px;height:1px;background:#EBEBEB;"></div>
<div class="r" style="left:59px;top:740px;width:1821px;height:24px;background:#FFFFFF;"></div>
<div class="r" style="left:59px;top:764px;width:1821px;height:1px;background:#A0A0A0;"></div>
<div class="r" style="left:58px;top:740px;width:1px;height:25px;background:#A0A0A0;"></div>
<div class="r" style="left:362px;top:740px;width:1px;height:25px;background:#A0A0A0;"></div>
<div class="r" style="left:666px;top:740px;width:1px;height:25px;background:#A0A0A0;"></div>
<div class="r" style="left:970px;top:740px;width:1px;height:25px;background:#A0A0A0;"></div>
<div class="r" style="left:1273px;top:740px;width:1px;height:25px;background:#A0A0A0;"></div>
<div class="r" style="left:1577px;top:740px;width:1px;height:25px;background:#A0A0A0;"></div>
<div class="t" style="left:63px;top:745.47px;font-size:15.5px;line-height:17.316px;color:#1E1E1E;font-weight:normal;transform:scaleX(0.998);transform-origin:0 0;">Anxious/afraid</div>
<div class="t" style="left:671px;top:745.47px;font-size:15.5px;line-height:17.316px;color:#1E1E1E;font-weight:normal;transform:scaleX(0.97);transform-origin:0 0;">7</div>
<div class="t" style="left:1278px;top:745.47px;font-size:15.5px;line-height:17.316px;color:#1E1E1E;font-weight:normal;transform:scaleX(0.97);transform-origin:0 0;">0</div>
<svg class="r" style="left:1720px;top:743px" width="17" height="17" viewBox="0 0 17 17"><rect x="0.5" y="0.5" width="16" height="16" rx="3.2" fill="#0063C6"/><path d="M4.5,8.8 L7,11 L12,6" stroke="#B5D3F2" stroke-width="1.3" fill="none"/></svg>
<div class="r" style="left:8px;top:765px;width:50px;height:25px;background:#FFFFFF;"></div>
<div class="r" style="left:8px;top:789px;width:50px;height:1px;background:#EBEBEB;"></div>
<div class="r" style="left:59px;top:765px;width:1821px;height:24px;background:#CDCDCD;"></div>
<div class="r" style="left:59px;top:789px;width:1821px;height:1px;background:#A0A0A0;"></div>
<div class="r" style="left:58px;top:765px;width:1px;height:25px;background:#A0A0A0;"></div>
<div class="r" style="left:362px;top:765px;width:1px;height:25px;background:#A0A0A0;"></div>
<div class="r" style="left:666px;top:765px;width:1px;height:25px;background:#A0A0A0;"></div>
<div class="r" style="left:970px;top:765px;width:1px;height:25px;background:#A0A0A0;"></div>
<div class="r" style="left:1273px;top:765px;width:1px;height:25px;background:#A0A0A0;"></div>
<div class="r" style="left:1577px;top:765px;width:1px;height:25px;background:#A0A0A0;"></div>
<div class="t" style="left:63px;top:770.47px;font-size:15.5px;line-height:17.316px;color:#1E1E1E;font-weight:normal;transform:scaleX(0.998);transform-origin:0 0;">Angry/hostile</div>
<div class="t" style="left:671px;top:770.47px;font-size:15.5px;line-height:17.316px;color:#1E1E1E;font-weight:normal;transform:scaleX(0.97);transform-origin:0 0;">8</div>
<div class="t" style="left:1278px;top:770.47px;font-size:15.5px;line-height:17.316px;color:#1E1E1E;font-weight:normal;transform:scaleX(0.97);transform-origin:0 0;">0</div>
<svg class="r" style="left:1720px;top:768px" width="17" height="17" viewBox="0 0 17 17"><rect x="0.5" y="0.5" width="16" height="16" rx="3.2" fill="#0063C6"/><path d="M4.5,8.8 L7,11 L12,6" stroke="#B5D3F2" stroke-width="1.3" fill="none"/></svg>
<div class="r" style="left:8px;top:790px;width:50px;height:25px;background:#FFFFFF;"></div>
<div class="r" style="left:8px;top:814px;width:50px;height:1px;background:#EBEBEB;"></div>
<div class="r" style="left:59px;top:790px;width:1821px;height:24px;background:#FFFFFF;"></div>
<div class="r" style="left:59px;top:814px;width:1821px;height:1px;background:#A0A0A0;"></div>
<div class="r" style="left:58px;top:790px;width:1px;height:25px;background:#A0A0A0;"></div>
<div class="r" style="left:362px;top:790px;width:1px;height:25px;background:#A0A0A0;"></div>
<div class="r" style="left:666px;top:790px;width:1px;height:25px;background:#A0A0A0;"></div>
<div class="r" style="left:970px;top:790px;width:1px;height:25px;background:#A0A0A0;"></div>
<div class="r" style="left:1273px;top:790px;width:1px;height:25px;background:#A0A0A0;"></div>
<div class="r" style="left:1577px;top:790px;width:1px;height:25px;background:#A0A0A0;"></div>
<div class="t" style="left:63px;top:795.47px;font-size:15.5px;line-height:17.316px;color:#1E1E1E;font-weight:normal;transform:scaleX(0.998);transform-origin:0 0;">Inappropriate to situation</div>
<div class="t" style="left:671px;top:795.47px;font-size:15.5px;line-height:17.316px;color:#1E1E1E;font-weight:normal;transform:scaleX(0.97);transform-origin:0 0;">9</div>
<div class="t" style="left:1278px;top:795.47px;font-size:15.5px;line-height:17.316px;color:#1E1E1E;font-weight:normal;transform:scaleX(0.97);transform-origin:0 0;">0</div>
<svg class="r" style="left:1720px;top:793px" width="17" height="17" viewBox="0 0 17 17"><rect x="0.5" y="0.5" width="16" height="16" rx="3.2" fill="#0063C6"/><path d="M4.5,8.8 L7,11 L12,6" stroke="#B5D3F2" stroke-width="1.3" fill="none"/></svg>
<div class="r" style="left:8px;top:815px;width:50px;height:25px;background:#FFFFFF;"></div>
<div class="r" style="left:59px;top:815px;width:1821px;height:24px;background:#CDCDCD;"></div>
<div class="r" style="left:58px;top:815px;width:1px;height:25px;background:#A0A0A0;"></div>
<div class="r" style="left:362px;top:815px;width:1px;height:25px;background:#A0A0A0;"></div>
<div class="r" style="left:666px;top:815px;width:1px;height:25px;background:#A0A0A0;"></div>
<div class="r" style="left:970px;top:815px;width:1px;height:25px;background:#A0A0A0;"></div>
<div class="r" style="left:1273px;top:815px;width:1px;height:25px;background:#A0A0A0;"></div>
<div class="r" style="left:1577px;top:815px;width:1px;height:25px;background:#A0A0A0;"></div>
<svg class="r" style="left:1720px;top:818px" width="17" height="17" viewBox="0 0 17 17"><rect x="1" y="1" width="15" height="15" rx="3" fill="#F3F3F3" stroke="#6A6A6A" stroke-width="1.2"/></svg>
<svg class="r" style="left:19.5px;top:825px" width="8" height="8" viewBox="0 0 8 8"><path d="M4,0.8 V7.2 M1.2,2.4 L6.8,5.6 M6.8,2.4 L1.2,5.6" stroke="#3A3A3A" stroke-width="1.7"/></svg>
<div class="r" style="left:8px;top:840px;width:1872px;height:3px;background:#ABABAB;"></div></body></html>
